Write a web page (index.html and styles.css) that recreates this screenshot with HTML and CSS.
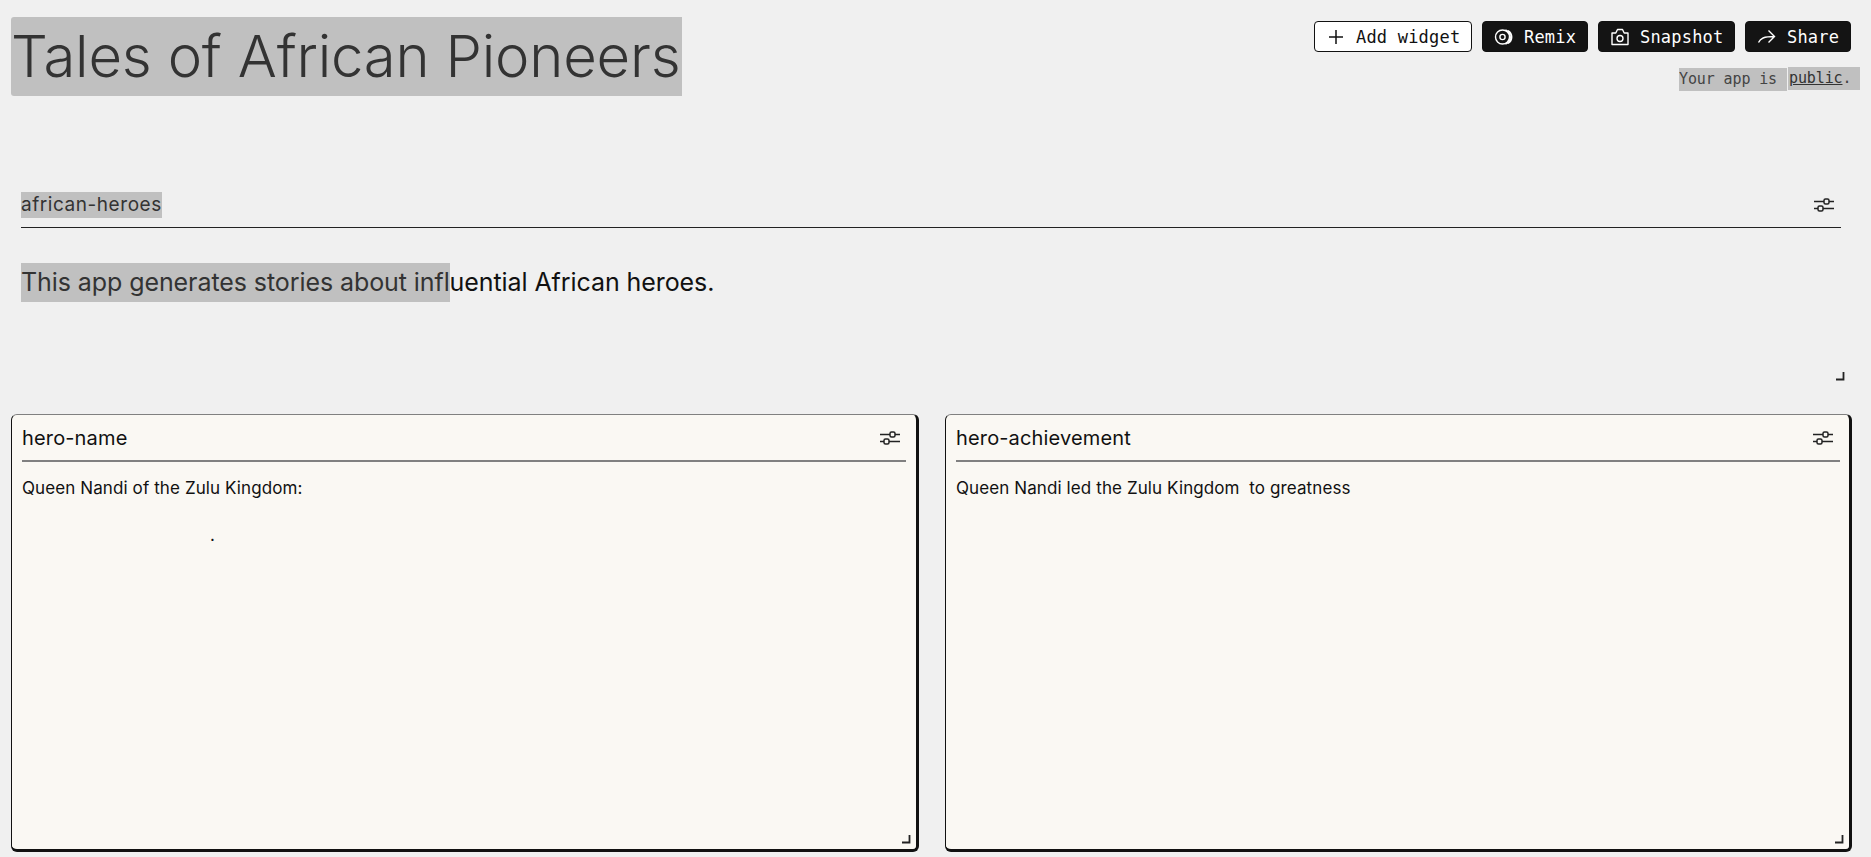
FILE: index.html
```html
<!DOCTYPE html>
<html lang="en">
<head>
<meta charset="utf-8">
<title>Tales of African Pioneers</title>
<link rel="stylesheet" href="styles.css">
</head>
<body>
<header class="top">
  <h1 class="title">Tales of African Pioneers</h1>
  <div class="actions">
    <div class="buttons">
      <button class="btn btn-light"><svg width="20" height="18" viewBox="0 0 20 18"><path d="M10 2v14M3 9h14" stroke="#111" stroke-width="1.5" fill="none"/></svg>Add widget</button>
      <button class="btn btn-dark"><svg width="20" height="18" viewBox="0 0 20 18"><g fill="none" stroke="#fff" stroke-width="1.4"><circle cx="8.500" cy="9" r="7"/><circle cx="8.500" cy="9" r="2.600"/><path d="M11.500 2a7.500 7.500 0 0 1 0 14M14 2.500a7.500 7.500 0 0 1 0 13"/></g></svg>Remix</button>
      <button class="btn btn-dark"><svg width="20" height="18" viewBox="0 0 20 18"><g fill="none" stroke="#fff" stroke-width="1.4" stroke-linejoin="round"><path d="M2 5h3.800L7.500 1.500h5L14.200 5H18v11.500H2z"/><circle cx="10" cy="10.500" r="3"/></g></svg>Snapshot</button>
      <button class="btn btn-dark"><svg width="20" height="18" viewBox="0 0 20 18"><path d="M1.500 14.500c2-4 5-6 16-6M11.500 2.500l6 6-6 6" fill="none" stroke="#fff" stroke-width="1.4"/></svg>Share</button>
    </div>
    <p class="status"><span class="sel sel-first">Your app is </span><span class="sel sel-public"><a class="public" href="#">public</a>.</span></p>
  </div>
</header>

<section class="intro">
  <div class="intro-head">
    <span class="intro-name sel-dim">african-heroes</span>
    <svg class="tune" width="20" height="16" viewBox="0 0 20 16"><use href="#tune-icon"/></svg>
  </div>
  <p class="intro-text"><span class="sel-dim sel-tall">This app generates stories about infl</span>uential African heroes.</p>
  <svg class="corner corner-intro" width="10" height="10" viewBox="0 0 10 10"><path d="M1 8.500h7.500V1" fill="none" stroke="#222" stroke-width="1.800"/></svg>
</section>

<main class="cards">
  <article class="card">
    <div class="card-head">
      <span class="card-name">hero-name</span>
      <svg class="tune" width="20" height="16" viewBox="0 0 20 16"><use href="#tune-icon"/></svg>
    </div>
    <p class="card-text">Queen Nandi of the Zulu Kingdom:</p>
    <p class="card-text card-dot">.</p>
    <svg class="corner" width="10" height="10" viewBox="0 0 10 10"><path d="M1 8.500h7.500V1" fill="none" stroke="#222" stroke-width="1.800"/></svg>
  </article>
  <article class="card card-wide">
    <div class="card-head">
      <span class="card-name">hero-achievement</span>
      <svg class="tune" width="20" height="16" viewBox="0 0 20 16"><use href="#tune-icon"/></svg>
    </div>
    <p class="card-text">Queen Nandi led the Zulu Kingdom&nbsp; to greatness</p>
    <svg class="corner" width="10" height="10" viewBox="0 0 10 10"><path d="M1 8.500h7.500V1" fill="none" stroke="#222" stroke-width="1.800"/></svg>
  </article>
</main>

<svg class="defs" width="0" height="0">
  <symbol id="tune-icon" viewBox="0 0 20 16">
    <g fill="none" stroke="#222" stroke-width="1.500">
      <path d="M0 4.500h10M15 4.500h5M0 11.500h4M9 11.500h11"/>
      <rect x="10" y="2" width="5" height="5" rx="1.500"/>
      <rect x="4" y="9" width="5" height="5" rx="1.500"/>
    </g>
  </symbol>
</svg>
</body>
</html>
```
FILE: styles.css
```css
* { box-sizing: border-box; }
html, body { margin: 0; height: 857px; overflow: hidden; }
body {
  background: #f0f0f0;
  color: #111;
  font-family: "Inter", "Noto Sans", sans-serif;
  padding: 17px 20px 0 11px;
}
.top { display: flex; justify-content: space-between; align-items: flex-start; height: 161px; }
.title {
  margin: 0;
  height: 79px;
  width: 671px;
  background: #c0c0c0;
  border-radius: 3px 0 0 3px;
  color: #333;
  font-size: 58px;
  font-weight: 300;
  line-height: 79px;
  white-space: nowrap;
  letter-spacing: -0.2px;
}
.actions { display: flex; flex-direction: column; align-items: flex-end; padding-top: 4px; }
.buttons { display: flex; gap: 10px; }
.btn {
  display: flex;
  align-items: center;
  height: 31px;
  border-radius: 4px;
  font-family: "DejaVu Sans Mono", monospace;
  font-size: 17px;
  letter-spacing: 0.2px;
  gap: 10px;
  padding: 0 0 0 11px;
  border: 1px solid #111;
}
.btn-light { width: 158px; background: #fff; color: #111; }
.btn-dark { background: #141414; color: #fff; }
.btn-dark:nth-child(2) { width: 106px; }
.btn-dark:nth-child(3) { width: 137px; }
.btn-dark:nth-child(4) { width: 106px; }
.status {
  display: flex;
  align-items: flex-start;
  margin: 15px -9px 0 0;
  font-family: "DejaVu Sans Mono", monospace;
  font-size: 15px;
  letter-spacing: -0.12px;
  color: #444;
}
.sel { background: #c0c0c0; display: block; height: 23px; line-height: 23px; }
.sel-first { width: 108px; margin: 1px 1px 0 0; white-space: pre; overflow: hidden; }
.sel-public { width: 72px; padding-left: 1px; }
.public { color: #333; text-decoration: underline; }
.intro { position: relative; height: 236px; padding: 13px 10px 0 10px; }
.intro-head {
  display: flex;
  justify-content: space-between;
  align-items: flex-end;
  height: 37px;
  padding-bottom: 9px;
  border-bottom: 1px solid #222;
}
.intro-head .tune { margin: 0 7px 5px 0; }
.intro-name { font-size: 19px; color: #333; line-height: 26px; white-space: nowrap; letter-spacing: 0.55px; }
.sel-dim { background: #c0c0c0; }
.intro-text { margin: 35px 0 0; font-size: 25px; line-height: 39px; letter-spacing: -0.08px; color: #111; white-space: nowrap; }
.sel-tall { color: #333; display: inline-block; }
.corner { position: absolute; right: 5px; bottom: 5px; }
.corner-intro { right: 6px; bottom: 33px; }
.cards { display: grid; grid-template-columns: 908px 907px; gap: 26px; }
.card {
  position: relative;
  height: 438px;
  background: #faf8f3;
  border: solid #111;
  border-width: 1px 3px 3px 1px;
  border-top-color: #808080;
  border-radius: 6px;
  padding: 0 10px;
}
.card-wide { padding-right: 9px; }
.card-head {
  display: flex;
  justify-content: space-between;
  align-items: center;
  height: 47px;
  border-bottom: 2px solid #808080;
}
.card-head .tune { margin-right: 6px; }
.card-wide .tune { margin-right: 7px; }
.card-name { font-size: 20px; letter-spacing: 0.15px; }
.card-text { margin: 15px 0 0; font-size: 17px; line-height: 22px; letter-spacing: 0.1px; }
.card-dot { margin: 25px 0 0; padding-left: 188px; }
.defs { position: absolute; }
```
